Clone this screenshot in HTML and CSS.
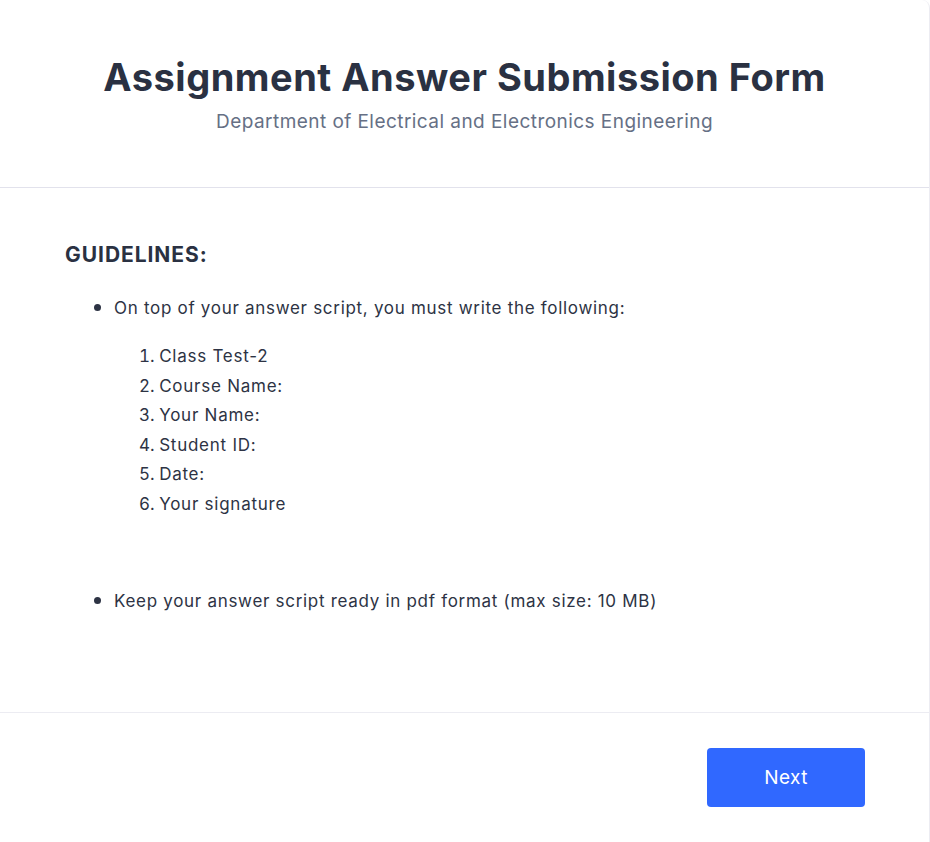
FILE: index.html
```html
<!DOCTYPE html>
<html lang="en">
<head>
<meta charset="utf-8">
<title>Assignment Answer Submission Form</title>
<link rel="stylesheet" href="styles.css">
</head>
<body>
<div class="card">
  <header class="card-header">
    <h1 class="title">Assignment Answer Submission Form</h1>
    <p class="subtitle">Department of Electrical and Electronics Engineering</p>
  </header>
  <section class="card-body">
    <h2 class="section-title">GUIDELINES:</h2>
    <ul class="guidelines">
      <li class="guideline">
        On top of your answer script, you must write the following:
        <ol class="fields">
          <li>Class Test-2</li>
          <li>Course Name:</li>
          <li>Your Name:</li>
          <li>Student ID:</li>
          <li>Date:</li>
          <li>Your signature</li>
        </ol>
      </li>
      <li class="guideline">Keep your answer script ready in pdf format (max size: 10 MB)</li>
    </ul>
  </section>
  <footer class="card-footer">
    <button class="btn-next" type="button">Next</button>
  </footer>
</div>
</body>
</html>
```
FILE: styles.css
```css
* { box-sizing: border-box; }

html, body {
  margin: 0;
  padding: 0;
  background: #ffffff;
}

body {
  font-family: Inter, "Noto Sans", sans-serif;
  color: #2d3344;
}

.card {
  width: 930px;
  min-height: 842px;
  background: #ffffff;
  border-right: 1px solid #ececf2;
  border-top-right-radius: 8px;
  display: flex;
  flex-direction: column;
}

.card-header {
  height: 188px;
  border-bottom: 1px solid #e2e2ec;
  text-align: center;
  padding-top: 54px;
}

.title {
  margin: 0;
  font-size: 38px;
  line-height: 46px;
  font-weight: 700;
  color: #2a3142;
  letter-spacing: 0.5px;
}

.subtitle {
  margin: 10px 0 0;
  font-size: 19px;
  line-height: 24px;
  color: #667085;
  letter-spacing: 0.45px;
}

.card-body {
  height: 525px;
  border-bottom: 1px solid #ececf2;
  padding: 54px 65px 0;
}

.section-title {
  margin: 0;
  font-size: 21px;
  line-height: 26px;
  font-weight: 700;
  color: #2a3142;
  letter-spacing: 0.95px;
}

.guidelines {
  margin: 28px 0 0;
  padding-left: 49px;
  font-size: 17px;
  line-height: 22px;
  letter-spacing: 0.7px;
}

.guidelines > li::marker {
  font-size: 21px;
}

.guideline + .guideline {
  margin-top: 69px;
}

.fields {
  margin: 23px 0 0;
  padding-left: 25px;
  line-height: 29.6px;
  list-style-position: inside;
  letter-spacing: 0.75px;
}

.fields li::marker {
  font-size: 17px;
  letter-spacing: 0;
}

.card-footer {
  display: flex;
  justify-content: flex-end;
  padding: 35px 64px 0 0;
}

.btn-next {
  width: 158px;
  height: 59px;
  border: none;
  border-radius: 4px;
  background: #3068ff;
  color: #ffffff;
  font-family: Inter, "Noto Sans", sans-serif;
  font-size: 19px;
  font-weight: 400;
  letter-spacing: 0.4px;
  cursor: pointer;
}
```
